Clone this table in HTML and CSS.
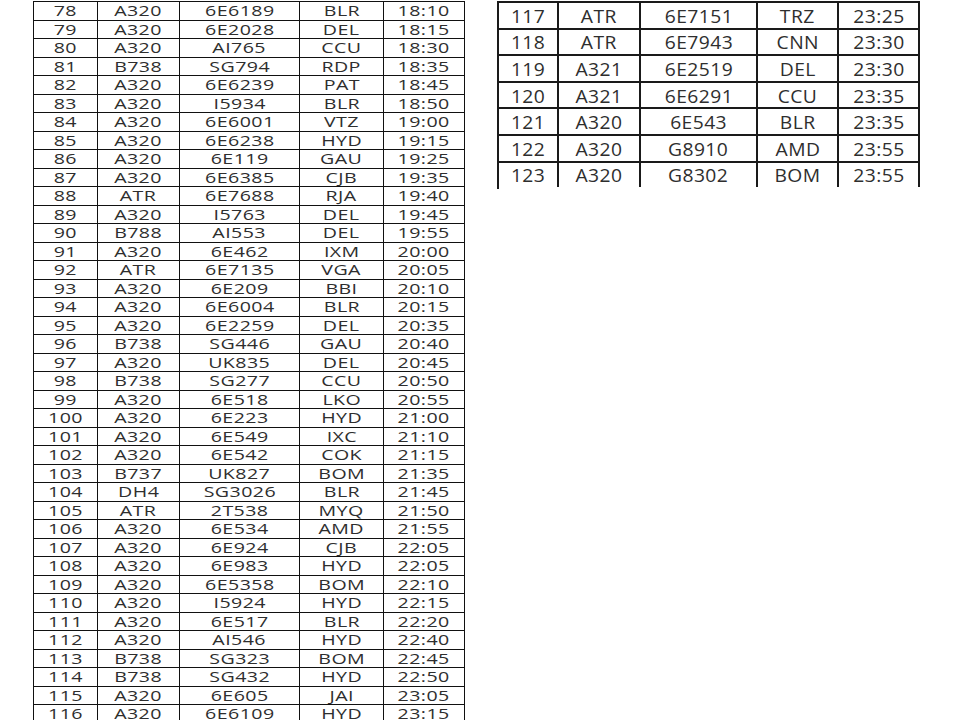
FILE: index.html
```html
<!DOCTYPE html>
<html>
<head>
<meta charset="utf-8">
<link rel="stylesheet" href="styles.css">
</head>
<body>
<div class="page">
  <div class="sheet sheet-left" id="left"></div>
  <div class="sheet sheet-right" id="right"></div>
</div>
<script src="app.js"></script>
</body>
</html>
```
FILE: styles.css
```css
html, body {
  margin: 0;
  padding: 0;
  background: #ffffff;
  overflow: hidden;
  height: 720px;
}
.page {
  display: flex;
  align-items: flex-start;
  padding-top: 1px;
  padding-left: 33px;
  gap: 32px;
  font-family: "Open Sans", "Noto Sans", sans-serif;
  color: #2e2e2e;
}
.sheet {
  display: grid;
}
.sheet-left {
  grid-template-columns: 64px 82px 120px 84px 81px;
  grid-auto-rows: 18.5px;
  border-left: 1px solid #111;
  border-top: 1px solid #111;
  font-size: 14px;
}
.sheet-right {
  grid-template-columns: 60px 82px 117px 81px 81px;
  grid-auto-rows: 26.6px;
  border-left: 2px solid #1a1a1a;
  border-top: 2px solid #1a1a1a;
  font-size: 18px;
}
.cell {
  display: flex;
  align-items: center;
  justify-content: center;
  box-sizing: border-box;
  white-space: nowrap;
  overflow: hidden;
}
.sheet-left .cell {
  border-right: 1px solid #111;
  border-bottom: 1px solid #111;
}
.sheet-right .cell {
  border-right: 2px solid #1a1a1a;
  border-bottom: 2px solid #1a1a1a;
}
.sheet-right .cell.last {
  border-bottom: none;
  height: 24.5px;
}
.txt {
  display: inline-block;
}
.sheet-left .txt {
  transform: scaleX(1.4);
  letter-spacing: 0.3px;
  line-height: 1;
  padding-top: 1px;
}
.sheet-right .txt {
  transform: scaleX(1.07);
  letter-spacing: 0.4px;
  line-height: 1;
  padding-top: 1px;
}
```
FILE: app.js
```js
var leftRows = [
["78","A320","6E6189","BLR","18:10"],
["79","A320","6E2028","DEL","18:15"],
["80","A320","AI765","CCU","18:30"],
["81","B738","SG794","RDP","18:35"],
["82","A320","6E6239","PAT","18:45"],
["83","A320","I5934","BLR","18:50"],
["84","A320","6E6001","VTZ","19:00"],
["85","A320","6E6238","HYD","19:15"],
["86","A320","6E119","GAU","19:25"],
["87","A320","6E6385","CJB","19:35"],
["88","ATR","6E7688","RJA","19:40"],
["89","A320","I5763","DEL","19:45"],
["90","B788","AI553","DEL","19:55"],
["91","A320","6E462","IXM","20:00"],
["92","ATR","6E7135","VGA","20:05"],
["93","A320","6E209","BBI","20:10"],
["94","A320","6E6004","BLR","20:15"],
["95","A320","6E2259","DEL","20:35"],
["96","B738","SG446","GAU","20:40"],
["97","A320","UK835","DEL","20:45"],
["98","B738","SG277","CCU","20:50"],
["99","A320","6E518","LKO","20:55"],
["100","A320","6E223","HYD","21:00"],
["101","A320","6E549","IXC","21:10"],
["102","A320","6E542","COK","21:15"],
["103","B737","UK827","BOM","21:35"],
["104","DH4","SG3026","BLR","21:45"],
["105","ATR","2T538","MYQ","21:50"],
["106","A320","6E534","AMD","21:55"],
["107","A320","6E924","CJB","22:05"],
["108","A320","6E983","HYD","22:05"],
["109","A320","6E5358","BOM","22:10"],
["110","A320","I5924","HYD","22:15"],
["111","A320","6E517","BLR","22:20"],
["112","A320","AI546","HYD","22:40"],
["113","B738","SG323","BOM","22:45"],
["114","B738","SG432","HYD","22:50"],
["115","A320","6E605","JAI","23:05"],
["116","A320","6E6109","HYD","23:15"]
];
var rightRows = [
["117","ATR","6E7151","TRZ","23:25"],
["118","ATR","6E7943","CNN","23:30"],
["119","A321","6E2519","DEL","23:30"],
["120","A321","6E6291","CCU","23:35"],
["121","A320","6E543","BLR","23:35"],
["122","A320","G8910","AMD","23:55"],
["123","A320","G8302","BOM","23:55"]
];
function fill(id, rows) {
  var el = document.getElementById(id);
  rows.forEach(function (r, i) {
    r.forEach(function (v) {
      var c = document.createElement("div");
      c.className = "cell" + (i === rows.length - 1 ? " last" : "");
      var s = document.createElement("span");
      s.className = "txt";
      s.textContent = v;
      c.appendChild(s);
      el.appendChild(c);
    });
  });
}
fill("left", leftRows);
fill("right", rightRows);
```
